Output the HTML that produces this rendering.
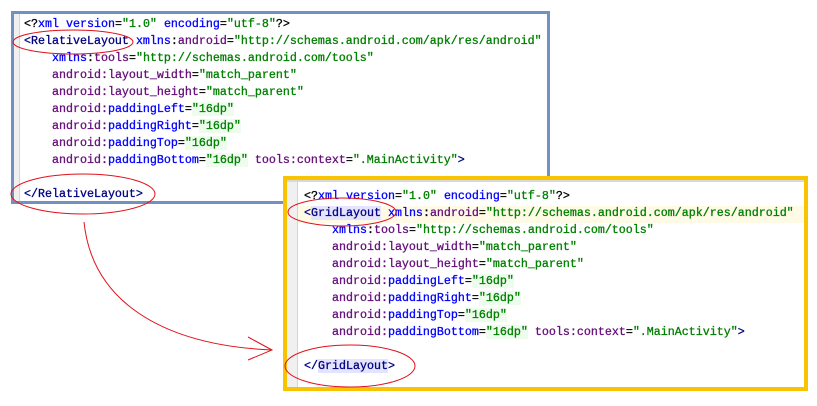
<!DOCTYPE html>
<html><head><style>
html,body{margin:0;padding:0;background:#fff;width:817px;height:406px;overflow:hidden;position:relative}
.box{position:absolute;background:#fff;box-sizing:border-box}
.code{position:absolute;font-family:"Liberation Mono",monospace;font-size:11.67px;line-height:17px;white-space:pre;color:#000;-webkit-text-stroke:0.3px currentColor}
.t{color:#000080}.a{color:#660e7a}.b{color:#0000ff}.v{color:#008000}
.n{color:#008000;background:#edfced}
.g{position:absolute;top:0;bottom:0;background:#f0f0f0;border-right:1px solid #d4d4d4}
</style></head><body>
<div class="box" style="left:11px;top:11px;width:539px;height:193px;border:3px solid #7390c0">
 <div class="g" style="left:0;width:5px"></div>
 <div class="code" style="left:10px;top:2px">&lt;?<span class="b">xml version</span>=<span class="v">"1.0"</span> <span class="b">encoding</span>=<span class="v">"utf-8"</span>?&gt;
<span class="t">&lt;RelativeLayout</span> <span class="b">xmlns</span>:<span class="a">android</span>=<span class="v">"http://schemas.android.com/apk/res/android"</span>
    <span class="b">xmlns</span>:<span class="a">tools</span>=<span class="v">"http://schemas.android.com/tools"</span>
    <span class="a">android:layout_width</span>=<span class="v">"match_parent"</span>
    <span class="a">android:layout_height</span>=<span class="v">"match_parent"</span>
    <span class="a">android:</span><span class="b">paddingLeft</span>=<span class="n">"16dp"</span>
    <span class="a">android:</span><span class="b">paddingRight</span>=<span class="n">"16dp"</span>
    <span class="a">android:</span><span class="b">paddingTop</span>=<span class="n">"16dp"</span>
    <span class="a">android:</span><span class="b">paddingBottom</span>=<span class="n">"16dp"</span> <span class="a">tools:context</span>=<span class="v">".MainActivity"</span><span class="t">&gt;</span>

<span class="t">&lt;/RelativeLayout&gt;</span></div>
</div>
<div class="box" style="left:283px;top:176px;width:525px;height:215px;border:4px solid #f8c300">
 <div style="position:absolute;left:0;right:0;top:0;height:2px;background:#d8d8d8"></div>
 <div style="position:absolute;left:0;right:0;top:26px;height:17px;background:#fffae6"></div>
 <div class="g" style="left:0;width:10px;top:2px"></div>
 <div class="code" style="left:17px;top:8px">&lt;?<span class="b">xml version</span>=<span class="v">"1.0"</span> <span class="b">encoding</span>=<span class="v">"utf-8"</span>?&gt;
<span class="t">&lt;<span style="background:#e4e4ff">GridLayout</span></span> <span class="b">xmlns</span>:<span class="a">android</span>=<span class="v">"http://schemas.android.com/apk/res/android"</span>
    <span class="b">xmlns</span>:<span class="a">tools</span>=<span class="v">"http://schemas.android.com/tools"</span>
    <span class="a">android:layout_width</span>=<span class="v">"match_parent"</span>
    <span class="a">android:layout_height</span>=<span class="v">"match_parent"</span>
    <span class="a">android:</span><span class="b">paddingLeft</span>=<span class="n">"16dp"</span>
    <span class="a">android:</span><span class="b">paddingRight</span>=<span class="n">"16dp"</span>
    <span class="a">android:</span><span class="b">paddingTop</span>=<span class="n">"16dp"</span>
    <span class="a">android:</span><span class="b">paddingBottom</span>=<span class="n">"16dp"</span> <span class="a">tools:context</span>=<span class="v">".MainActivity"</span><span class="t">&gt;</span>

<span class="t">&lt;/<span style="background:#e4e4ff">GridLayout</span>&gt;</span></div>
</div>
<svg width="817" height="406" style="position:absolute;left:0;top:0" fill="none" stroke="#e0101a" stroke-width="1">
 <ellipse cx="73" cy="42" rx="60" ry="12"/>
 <ellipse cx="83" cy="194" rx="72" ry="20"/>
 <ellipse cx="342" cy="212" rx="54" ry="14"/>
 <ellipse cx="350" cy="366" rx="65" ry="21"/>
 <path d="M84 222 C 92 300, 160 345, 272 350"/>
 <path d="M248 337 L272 350 L248 360"/>
</svg>
</body></html>
